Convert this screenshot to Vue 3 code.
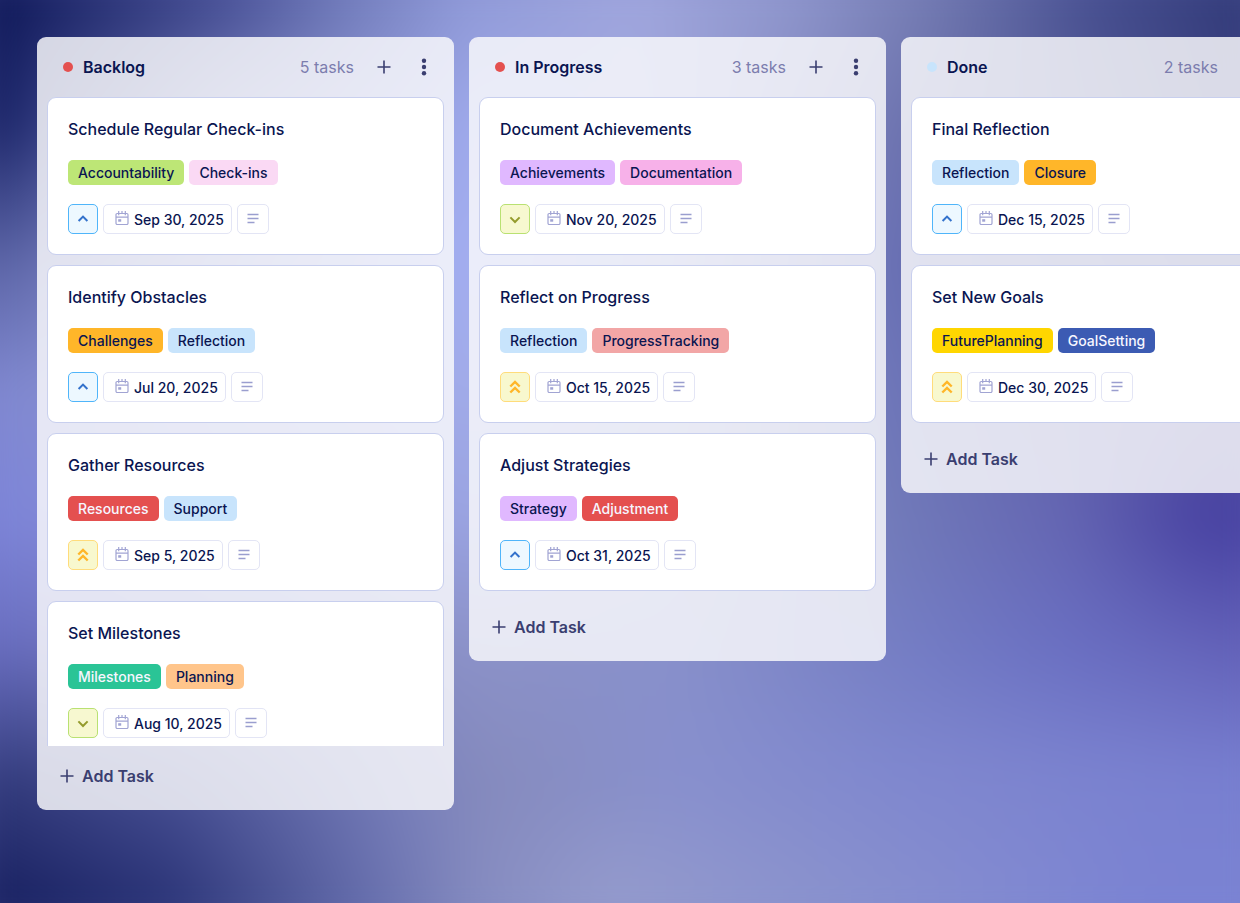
<script setup>
import { ref } from 'vue'

const columns = ref([
  {
    name: 'Backlog', dot: 'red', count: 5,
    cards: [
      { title: 'Schedule Regular Check-ins', tags: [['Accountability', 'lime'], ['Check-ins', 'blush']], priority: 'high', date: 'Sep 30, 2025' },
      { title: 'Identify Obstacles', tags: [['Challenges', 'amber'], ['Reflection', 'sky']], priority: 'high', date: 'Jul 20, 2025' },
      { title: 'Gather Resources', tags: [['Resources', 'red'], ['Support', 'sky']], priority: 'highest', date: 'Sep 5, 2025' },
      { title: 'Set Milestones', tags: [['Milestones', 'green'], ['Planning', 'peach']], priority: 'low', date: 'Aug 10, 2025' },
    ],
  },
  {
    name: 'In Progress', dot: 'red', count: 3,
    cards: [
      { title: 'Document Achievements', tags: [['Achievements', 'violet'], ['Documentation', 'pink']], priority: 'low', date: 'Nov 20, 2025' },
      { title: 'Reflect on Progress', tags: [['Reflection', 'sky'], ['ProgressTracking', 'salmon']], priority: 'highest', date: 'Oct 15, 2025' },
      { title: 'Adjust Strategies', tags: [['Strategy', 'violet'], ['Adjustment', 'red']], priority: 'high', date: 'Oct 31, 2025' },
    ],
  },
  {
    name: 'Done', dot: 'sky', count: 2,
    cards: [
      { title: 'Final Reflection', tags: [['Reflection', 'sky'], ['Closure', 'amber']], priority: 'high', date: 'Dec 15, 2025' },
      { title: 'Set New Goals', tags: [['FuturePlanning', 'yellow'], ['GoalSetting', 'blue']], priority: 'highest', date: 'Dec 30, 2025' },
    ],
  },
])

const arrows = {
  high: ['M4.6 11 9 6.600 13.400 11'],
  low: ['M4.400 7.400 9 12 13.600 7.400'],
  highest: ['M4.300 8.500 9 4 13.700 8.500', 'M4.300 14.500 9 10l4.700 4.500'],
}
</script>

<template>
  <main class="board">
    <div class="backdrop" aria-hidden="true">
      <div v-for="n in 8" :key="n" class="band" :class="`band-${n}`"></div>
    </div>

    <section v-for="col in columns" :key="col.name" class="column">
      <header class="head">
        <span class="dot" :class="col.dot"></span>
        <h2>{{ col.name }}</h2>
        <span class="count">{{ col.count }} tasks</span>
        <button type="button" class="icon-btn" :aria-label="`Add task to ${col.name}`">
          <svg width="14" height="14" viewBox="0 0 14 14"><path d="M7 .5v13M.5 7h13" /></svg>
        </button>
        <button type="button" class="icon-btn more" :aria-label="`${col.name} options`">
          <svg width="6" height="18" viewBox="0 0 6 18"><circle cx="3" cy="2.8" r="2.2" /><circle cx="3" cy="9" r="2.2" /><circle cx="3" cy="15.2" r="2.2" /></svg>
        </button>
      </header>

      <div class="list">
        <article v-for="card in col.cards" :key="card.title" class="card">
          <h3>{{ card.title }}</h3>
          <div class="tags">
            <span v-for="[label, tone] in card.tags" :key="label" class="tag" :class="tone">{{ label }}</span>
          </div>
          <div class="meta">
            <button type="button" class="chip priority" :class="card.priority" :aria-label="`Priority: ${card.priority}`">
              <svg width="18" height="18" viewBox="0 0 18 18"><path v-for="d in arrows[card.priority]" :key="d" :d="d" /></svg>
            </button>
            <button type="button" class="chip date">
              <svg width="14" height="16" viewBox="0 0 14 16">
                <path d="M2.200 2.500h9.600a1.200 1.200 0 0 1 1.200 1.200v8.600a1.200 1.200 0 0 1-1.200 1.200H2.200A1.200 1.200 0 0 1 1 12.300V3.700A1.200 1.200 0 0 1 2.200 2.500ZM1 6.200h12M3.700 0v4.300M7 0v2.500M10.300 0v4.300" />
                <rect x="3.200" y="8.200" width="3" height="2.500" />
              </svg>
              {{ card.date }}
            </button>
            <button type="button" class="chip note" aria-label="Description">
              <svg width="12" height="12" viewBox="0 0 12 12"><path d="M.5 1.500h11M.5 5.500h11M.5 9.500h7" /></svg>
            </button>
          </div>
        </article>
      </div>

      <button type="button" class="add">
        <svg width="14" height="14" viewBox="0 0 14 14"><path d="M7 .5v13M.5 7h13" /></svg>
        Add Task
      </button>
    </section>
  </main>
</template>

<style>
body {
  background: #7b82cf;
}
</style>

<style scoped>
.board {
  position: relative;
  isolation: isolate;
  box-sizing: border-box;
  min-height: 100vh;
  display: flex;
  align-items: flex-start;
  gap: 15px;
  padding: 37px;
  overflow: auto hidden;
  scrollbar-width: none;
  font-family: Inter, "Liberation Sans", sans-serif;
  color: #0a1551;
}

/* Wallpaper: horizontal colour bands, each fading into the one below it */
.backdrop {
  position: absolute;
  inset: -40px;
  z-index: -1;
  overflow: hidden;
  filter: blur(24px);
}

.band {
  position: absolute;
  inset: 0;
}

.band-1 { background: linear-gradient(90deg, #0f1858 3%, #474f95 20%, #707ab9 29%, #8f99d7 38%, #a0a6dd 51%, #8f96cc 63%, #757cb3 73%, #474f90 86%, #333b79 97%); }
.band-2 { background: linear-gradient(90deg, #1a2365 3%, #303a80 6%, #7880bd 20%, #a0abed 39%, #a0a6dd 53%, #6e74b0 71%, #383f80 97%); mask-image: linear-gradient(transparent 4%, #000 17%); }
.band-3 { background: linear-gradient(90deg, #5a63a4 3%, #6870b2 6%, #949dd8 25%, #a4aff2 39%, #9aa2da 53%, #686fb3 71%, #4a5094 97%); mask-image: linear-gradient(transparent 17%, #000 31%); }
.band-4 { background: linear-gradient(90deg, #8088d0 3%, #949dd8 20%, #a2acea 39%, #969fd4 53%, #6d75b8 71%, #5551a0 97%); mask-image: linear-gradient(transparent 31%, #000 44%); }
.band-5 { background: linear-gradient(90deg, #7d84d8 3%, #8b93d6 20%, #9ba4e2 39%, #929aca 53%, #717ab9 71%, #6465b2 84%, #4842a2 94%); mask-image: linear-gradient(transparent 44%, #000 57%); }
.band-6 { background: linear-gradient(90deg, #686cbe 3%, #7d83c0 22%, #8c92c8 39%, #8890cb 54%, #757ec4 71%, #6a6fc2 84%, #6361b8 97%); mask-image: linear-gradient(transparent 57%, #000 70%); }
.band-7 { background: linear-gradient(90deg, #343c7d 3%, #4b5397 17%, #7a81bc 34%, #868bbd 40%, #8890cd 54%, #8088cf 71%, #787fd0 97%); mask-image: linear-gradient(transparent 70%, #000 83%); }
.band-8 { background: linear-gradient(90deg, #182060 3%, #2b3477 16%, #626aa9 30%, #858bc0 39%, #959bcc 49%, #8a92cd 65%, #7b83d3 90%); mask-image: linear-gradient(transparent 83%, #000 96%); }

.column {
  flex: none;
  width: 417px;
  max-height: calc(100vh - 130px);
  display: flex;
  flex-direction: column;
  border-radius: 9px;
  background: rgb(249 249 252 / 84%);
}

.head {
  flex: none;
  display: flex;
  align-items: center;
  height: 60px;
  padding: 0 20px 0 26px;
}

.dot {
  width: 10px;
  height: 10px;
  margin-right: 10px;
  border-radius: 50%;
}

h2 {
  flex: 1;
  margin: 0;
  font-size: 16px;
  line-height: 22px;
  font-weight: 600;
}

.count {
  margin-right: 16px;
  font-size: 16px;
  line-height: 22px;
  color: #7c7dae;
}

button {
  font: inherit;
  color: inherit;
  border: 0;
  background: none;
  cursor: pointer;
}

svg {
  flex: none;
  fill: none;
  stroke: currentColor;
}

.icon-btn {
  display: flex;
  align-items: center;
  justify-content: center;
  width: 28px;
  height: 28px;
  padding: 0;
  color: #3a3e70;
}

.icon-btn path,
.add path {
  stroke-width: 1.6;
}

.more {
  width: 20px;
  margin-left: 16px;
}

.more svg {
  fill: currentColor;
  stroke: none;
}

.list {
  display: flex;
  flex-direction: column;
  gap: 10px;
  min-height: 0;
  padding: 0 10px 6px;
  overflow-y: auto;
  scrollbar-width: none;
}

.card {
  flex: none;
  padding: 20px;
  border: 1px solid #c8cfee;
  border-radius: 9px;
  background: #fff;
}

h3 {
  margin: 0 0 20px;
  font-size: 16px;
  line-height: 22px;
  font-weight: 500;
}

.tags,
.meta {
  display: flex;
  gap: 5px;
}

.tags {
  margin-bottom: 19px;
}

.tag {
  padding: 0 10px;
  border-radius: 5px;
  font-size: 14px;
  line-height: 25px;
  font-weight: 500;
}

.lime { background: #bde676; }
.blush { background: #fad9f4; }
.amber { background: #ffb629; }
.sky { background: #c8e4fc; }
.red { background: #e4504f; }
.green { background: #2ac496; }
.peach { background: #ffc58b; }
.violet { background: #e0b8ff; }
.pink { background: #f7b1e9; }
.salmon { background: #f2a6a6; }
.yellow { background: #ffd600; }
.blue { background: #3c5bb3; }
.tag.red, .tag.green, .tag.blue { color: #f6f6ff; }

.chip {
  display: flex;
  align-items: center;
  justify-content: center;
  box-sizing: border-box;
  height: 30px;
  padding: 0;
  border: 1px solid #e3e5f5;
  border-radius: 5px;
}

.priority { width: 30px; }
.priority path { stroke-width: 2; }
.high { color: #3372cc; border-color: #4fb5fa; background: #edf8ff; }
.low { color: #949b2c; border-color: #b9e172; background: #f7f8d0; }
.highest { color: #ffb629; border-color: #ffdc7b; background: #f8f8ce; }
.highest path { stroke-width: 2.4; }

.date {
  gap: 5px;
  padding: 0 7px 0 11px;
  font-size: 14px;
  font-weight: 500;
}

.date svg {
  color: #a1a4d3;
  stroke-width: 1.2;
}

.date rect { fill: currentColor; stroke: none; }

.note {
  width: 32px;
  color: #9a9ecf;
}

.note svg {
  stroke-width: 1.3;
}

.add {
  flex: none;
  display: flex;
  align-items: center;
  gap: 8px;
  height: 64px;
  padding: 0 23px 5px;
  font-size: 16px;
  line-height: 22px;
  font-weight: 600;
  color: #3a3e70;
}
</style>
